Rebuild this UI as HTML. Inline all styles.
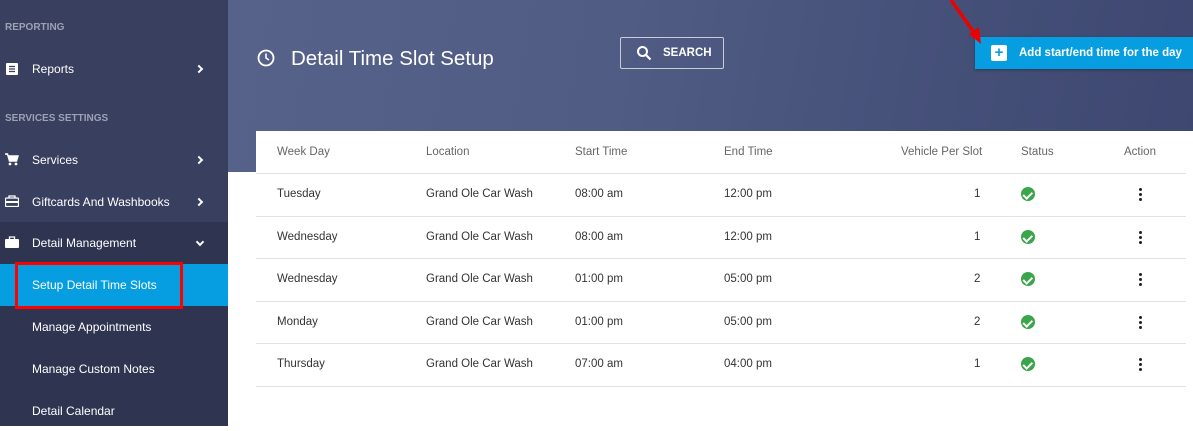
<!DOCTYPE html>
<html><head><style>
*{margin:0;padding:0;box-sizing:border-box}
body{width:1193px;height:426px;overflow:hidden;font-family:"Liberation Sans",Arial,sans-serif;background:#fff;position:relative}
.sb{position:absolute;left:0;top:0;width:228px;height:426px;background:#393f5f}
.dark{position:absolute;left:0;top:222px;width:228px;height:204px;background:#2f3551}
.t{position:absolute;color:#fff;font-size:12px;white-space:nowrap}
.sec{position:absolute;left:5px;color:#9ca1b6;font-size:10px;font-weight:bold}
.chev{position:absolute;left:196px;width:6px;height:6px;border:solid #fff;border-width:2px 2px 0 0;transform:rotate(45deg)}
.hdr{position:absolute;left:228px;top:0;width:965px;height:172px;background:linear-gradient(100deg,#56628a 0%,#505c84 40%,#46517a 70%,#3d4770 100%)}
.card{position:absolute;left:256px;top:131px;width:937px;height:300px;background:#fff}
.row{position:absolute;left:256px;width:930px;border-bottom:1px solid #e3e3e3;height:1px}
.c{position:absolute;font-size:11.5px;color:#333;white-space:nowrap}
.h{color:#666}
.ok{position:absolute;left:1021px;width:14px;height:14px;border-radius:50%;background:#3aa54a}
.ok:after{content:"";position:absolute;left:4px;top:2.5px;width:3.5px;height:6.5px;border:solid #fff;border-width:0 2px 2px 0;transform:rotate(45deg)}
.dots{position:absolute;left:1139px;width:3px}
.dots i{display:block;width:3px;height:3px;border-radius:50%;background:#222;margin-bottom:2px}
</style></head><body>
<div class="sb"></div><div class="dark"></div>
<div class="sec" style="top:22px">REPORTING</div>
<svg style="position:absolute;left:6px;top:63px" width="12" height="12"><rect width="12" height="12" rx="1" fill="#fff"/><path d="M3 3.5h6M3 6h6M3 8.5h6" stroke="#393f5f" stroke-width="1.2"/></svg>
<div class="t" style="left:32px;top:62px">Reports</div><div class="chev" style="top:66px"></div>
<div class="sec" style="top:113px">SERVICES SETTINGS</div>
<svg style="position:absolute;left:5px;top:153px" width="14" height="13"><path d="M0 1h2.5l2 7h7l1.5-5H3.5" fill="#fff" stroke="#fff" stroke-width="1.4"/><circle cx="5" cy="11" r="1.4" fill="#fff"/><circle cx="11" cy="11" r="1.4" fill="#fff"/></svg>
<div class="t" style="left:32px;top:153px">Services</div><div class="chev" style="top:157px"></div>
<svg style="position:absolute;left:5px;top:195px" width="14" height="12"><rect x="0.5" y="3" width="13" height="8.5" rx="1" fill="none" stroke="#fff" stroke-width="1.3"/><rect x="0.5" y="6" width="13" height="2" fill="#fff"/><path d="M4 3V1h6v2" stroke="#fff" stroke-width="1.3" fill="none"/></svg>
<div class="t" style="left:32px;top:195px">Giftcards And Washbooks</div><div class="chev" style="top:199px"></div>
<svg style="position:absolute;left:5px;top:236px" width="14" height="12"><rect x="0" y="3" width="14" height="9" rx="1" fill="#fff"/><path d="M4.5 3V1h5v2" stroke="#fff" stroke-width="1.3" fill="none"/></svg>
<div class="t" style="left:32px;top:236px">Detail Management</div><div class="chev" style="top:239px;left:197px;transform:rotate(135deg)"></div>
<div style="position:absolute;left:0;top:264px;width:228px;height:42px;background:#069ee1"></div>
<div style="position:absolute;left:15px;top:262px;width:168px;height:47px;border:3px solid #f00"></div>
<div class="t" style="left:32px;top:278px">Setup Detail Time Slots</div>
<div class="t" style="left:32px;top:320px">Manage Appointments</div>
<div class="t" style="left:32px;top:362px">Manage Custom Notes</div>
<div class="t" style="left:32px;top:404px">Detail Calendar</div>

<div class="hdr"></div>
<svg style="position:absolute;left:257px;top:49px" width="18" height="18"><circle cx="9" cy="9" r="7.5" fill="none" stroke="#fff" stroke-width="1.8"/><path d="M9 4.5V9l3 2" stroke="#fff" stroke-width="1.6" fill="none"/></svg>
<div class="t" style="left:291px;top:47px;font-size:20.5px">Detail Time Slot Setup</div>
<div style="position:absolute;left:620px;top:37px;width:104px;height:32px;border:1px solid #c8cbd8;border-radius:2px"></div>
<svg style="position:absolute;left:636px;top:45px" width="16" height="16"><circle cx="6.5" cy="6.5" r="4.5" fill="none" stroke="#fff" stroke-width="2"/><path d="M10 10l4.5 4.5" stroke="#fff" stroke-width="2.2"/></svg>
<div class="t" style="left:663px;top:47px;font-size:11.5px;font-weight:bold">SEARCH</div>
<div style="position:absolute;left:975px;top:37px;width:218px;height:32px;background:#069ee1;box-shadow:0 1px 3px rgba(0,0,0,.3)"></div>
<div style="position:absolute;left:991px;top:45px;width:16px;height:16px;background:#fff;border-radius:2px;color:#069ee1;font-weight:bold;font-size:15px;line-height:16px;text-align:center">+</div>
<div class="t" style="left:1019px;top:47px;font-size:11.5px;font-weight:bold">Add start/end time for the day</div>
<svg style="position:absolute;left:945px;top:0" width="40" height="48"><path d="M6 0L30 34" stroke="#e00" stroke-width="3.5"/><path d="M24 34L36 44 34 27z" fill="#e00"/></svg>

<div class="card"></div>
<div class="c h" style="left:277px;top:146px">Week Day</div>
<div class="c h" style="left:426px;top:146px">Location</div>
<div class="c h" style="left:575px;top:146px">Start Time</div>
<div class="c h" style="left:724px;top:146px">End Time</div>
<div class="c h" style="left:901px;top:146px">Vehicle Per Slot</div>
<div class="c h" style="left:1021px;top:146px">Status</div>
<div class="c h" style="left:1124px;top:146px">Action</div>
<div class="row" style="top:173px"></div>
<div class="row" style="top:216px"></div>
<div class="row" style="top:258px"></div>
<div class="row" style="top:301px"></div>
<div class="row" style="top:343px"></div>
<div class="row" style="top:386px"></div>

<div class="c" style="left:277px;top:188px">Tuesday</div><div class="c" style="left:426px;top:188px">Grand Ole Car Wash</div><div class="c" style="left:575px;top:188px">08:00 am</div><div class="c" style="left:724px;top:188px">12:00 pm</div><div class="c" style="left:974px;top:188px">1</div><div class="ok" style="top:187px"></div><div class="dots" style="top:188px"><i></i><i></i><i></i></div>
<div class="c" style="left:277px;top:231px">Wednesday</div><div class="c" style="left:426px;top:231px">Grand Ole Car Wash</div><div class="c" style="left:575px;top:231px">08:00 am</div><div class="c" style="left:724px;top:231px">12:00 pm</div><div class="c" style="left:974px;top:231px">1</div><div class="ok" style="top:230px"></div><div class="dots" style="top:231px"><i></i><i></i><i></i></div>
<div class="c" style="left:277px;top:273px">Wednesday</div><div class="c" style="left:426px;top:273px">Grand Ole Car Wash</div><div class="c" style="left:575px;top:273px">01:00 pm</div><div class="c" style="left:724px;top:273px">05:00 pm</div><div class="c" style="left:974px;top:273px">2</div><div class="ok" style="top:272px"></div><div class="dots" style="top:273px"><i></i><i></i><i></i></div>
<div class="c" style="left:277px;top:316px">Monday</div><div class="c" style="left:426px;top:316px">Grand Ole Car Wash</div><div class="c" style="left:575px;top:316px">01:00 pm</div><div class="c" style="left:724px;top:316px">05:00 pm</div><div class="c" style="left:974px;top:316px">2</div><div class="ok" style="top:315px"></div><div class="dots" style="top:316px"><i></i><i></i><i></i></div>
<div class="c" style="left:277px;top:358px">Thursday</div><div class="c" style="left:426px;top:358px">Grand Ole Car Wash</div><div class="c" style="left:575px;top:358px">07:00 am</div><div class="c" style="left:724px;top:358px">04:00 pm</div><div class="c" style="left:974px;top:358px">1</div><div class="ok" style="top:357px"></div><div class="dots" style="top:358px"><i></i><i></i><i></i></div>
</body></html>
